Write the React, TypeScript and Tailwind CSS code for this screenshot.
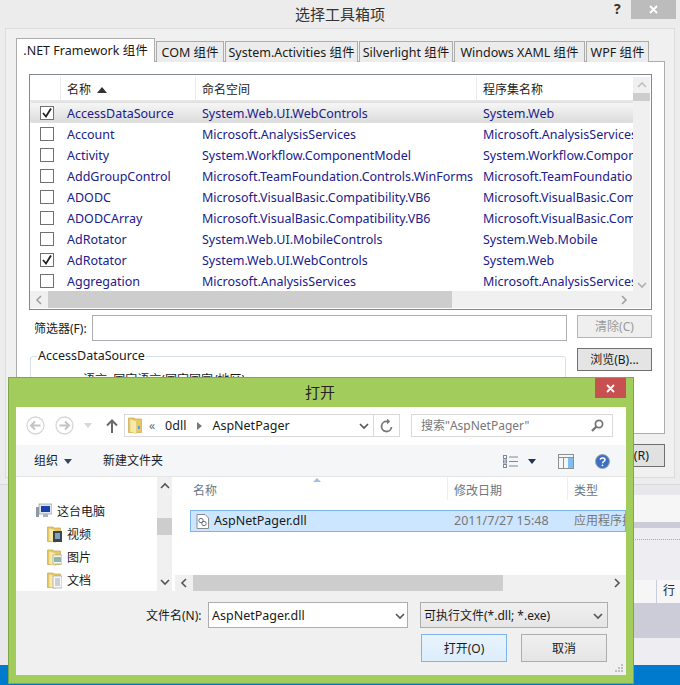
import React from "react";

const rows: [string, string, string, boolean][] = [
  ["AccessDataSource", "System.Web.UI.WebControls", "System.Web", true],
  ["Account", "Microsoft.AnalysisServices", "Microsoft.AnalysisServices", false],
  ["Activity", "System.Workflow.ComponentModel", "System.Workflow.ComponentModel", false],
  ["AddGroupControl", "Microsoft.TeamFoundation.Controls.WinForms", "Microsoft.TeamFoundation.Controls", false],
  ["ADODC", "Microsoft.VisualBasic.Compatibility.VB6", "Microsoft.VisualBasic.Compatibility", false],
  ["ADODCArray", "Microsoft.VisualBasic.Compatibility.VB6", "Microsoft.VisualBasic.Compatibility", false],
  ["AdRotator", "System.Web.UI.MobileControls", "System.Web.Mobile", false],
  ["AdRotator", "System.Web.UI.WebControls", "System.Web", true],
  ["Aggregation", "Microsoft.AnalysisServices", "Microsoft.AnalysisServices", false],
];

const tabs: [string, string][] = [
  ["COM 组件", "w-[68px]"],
  ["System.Activities 组件", "w-[133px]"],
  ["Silverlight 组件", "w-[94px]"],
  ["Windows XAML 组件", "w-[131px]"],
  ["WPF 组件", "w-[63px]"],
];

function Chevron({ dir, color = "#a0a0a0" }: { dir: "up" | "down" | "left" | "right"; color?: string }) {
  const d = {
    up: "M1 7 L5 3 L9 7",
    down: "M1 3 L5 7 L9 3",
    left: "M7 1 L3 5 L7 9",
    right: "M3 1 L7 5 L3 9",
  }[dir];
  return (
    <svg width="10" height="10" viewBox="0 0 10 10" fill="none" stroke={color} strokeWidth="1.6">
      <path d={d} />
    </svg>
  );
}

function Folder({ kind }: { kind: "plain" | "video" | "image" | "doc" }) {
  return (
    <svg width="15" height="17" viewBox="0 0 15 17" className="shrink-0">
      <path d="M0.5 1 H6 L7 2 H13.5 V15.5 H0.5 Z" fill="#e6c860" stroke="#c8a74e" strokeWidth="0.7" />
      <path d="M2 2 L8.5 4 V16.5 L2 15 Z" fill="#f8e9a6" stroke="#dcc06a" strokeWidth="0.5" />
      {kind === "plain" && <rect x="10" y="9" width="2" height="3" fill="#5aa0d8" />}
      {kind === "video" && <rect x="6" y="5" width="9" height="11" fill="#39454f" />}
      {kind === "video" && <rect x="8" y="7" width="5" height="6" fill="#7fa3b8" />}
      {kind === "image" && <rect x="6" y="6" width="9" height="9" fill="#f4f4f4" stroke="#9aa5ad" strokeWidth="0.7" />}
      {kind === "image" && <rect x="7" y="8" width="7" height="5" fill="#8fb7a8" />}
      {kind === "doc" && <rect x="6" y="4" width="9" height="12" fill="#f7f7f7" stroke="#9aa5ad" strokeWidth="0.7" />}
      {kind === "doc" && <path d="M8 7 H13 M8 9 H13 M8 11 H13 M8 13 H13" stroke="#8a98a8" strokeWidth="0.8" />}
    </svg>
  );
}

function NavCircle({ flip }: { flip?: boolean }) {
  return (
    <svg width="19" height="19" viewBox="0 0 19 19" fill="none">
      <circle cx="9.5" cy="9.5" r="8.5" stroke="#d6d6d6" strokeWidth="1.3" />
      <path
        d={flip ? "M4.5 9.5 H14 M10 5.5 L14 9.5 L10 13.5" : "M14.5 9.5 H5 M9 5.5 L5 9.5 L9 13.5"}
        stroke="#c4c4c4"
        strokeWidth="2"
      />
    </svg>
  );
}

function Band({ cls, children }: { cls: string; children?: React.ReactNode }) {
  return <div className={cls}>{children}</div>;
}

export default function App() {
  return (
    <div
      className="relative w-[680px] h-[685px] overflow-hidden flex flex-col bg-[#eeeef2] text-[12.5px] leading-[18px] text-[#1a1a1a]"
      style={{ fontFamily: '"Noto Sans", "Noto Sans CJK SC", sans-serif' }}
    >
      {/* Back dialog */}
      <div className="h-[485px] shrink-0 flex flex-col bg-[#ececec] border-b border-[#d8d8dc]">
        <div className="relative h-[28px] shrink-0 flex items-center justify-center">
          <span className="text-[15px] text-[#333]">选择工具箱项</span>
          <span className="absolute left-[614px] top-0 font-bold text-[14px] text-[#333]">?</span>
          <div className="absolute left-[631px] top-0 w-[45px] h-[19px] bg-[#bcbcbc] flex items-center justify-center">
            <svg width="9" height="9" viewBox="0 0 9 9" stroke="#fff" strokeWidth="1.8"><path d="M1 1 L8 8 M8 1 L1 8" /></svg>
          </div>
        </div>
        <div className="mx-[5px] h-[450px] bg-[#f0f0f0] border border-[#dcdcdc] px-[10px] pt-[10px] flex flex-col">
          {/* Tabs */}
          <div className="flex h-[23px] gap-px items-end shrink-0 relative z-10">
            <div className="w-[139px] h-[24px] bg-white border border-b-0 border-[#acacac] flex items-center justify-center whitespace-nowrap">.NET Framework 组件</div>
            {tabs.map(([t, w]) => (
              <div key={t} className={`${w} h-[21px] pt-[1px] bg-[#ececec] border border-b-0 border-[#acacac] flex items-center justify-center whitespace-nowrap`}>
                {t}
              </div>
            ))}
          </div>
          {/* Panel */}
          <div className="w-[649px] h-[373px] -mt-px bg-white border border-[#acacac] pl-[12px] pt-[12px] flex flex-col">
            {/* List */}
            <div className="w-[623px] h-[236px] border border-[#82878f] flex flex-col pt-[2px]">
              <div className="flex h-[214px]">
                <div className="w-[603px] overflow-hidden">
                  <div className="grid grid-cols-[30px_135px_281px_157px] h-[25px] border-b-2 border-[#e6e6e6] text-[12px] text-[#222]">
                    <div />
                    <div className="border-l border-[#eaeaea] pl-[6px] pt-[2px] flex items-center gap-[6px]">
                      名称
                      <svg width="10" height="6" viewBox="0 0 10 6"><path d="M0 6 L5 0 L10 6 Z" fill="#333" /></svg>
                    </div>
                    <div className="border-l border-[#eaeaea] pl-[6px] pt-[2px] flex items-center">命名空间</div>
                    <div className="border-l border-[#eaeaea] pl-[6px] pt-[2px] flex items-center">程序集名称</div>
                  </div>
                  {rows.map(([a, b, c, chk], i) => (
                    <div
                      key={i}
                      className={`grid grid-cols-[30px_135px_281px_157px] h-[21px] items-center text-[#20208a] whitespace-nowrap ${
                        i === 0 ? "bg-gradient-to-b from-[#f6f6f6] to-[#dcdcdc] border-y border-[#e0e0e0] rounded-l-[2px]" : ""
                      }`}
                    >
                      <div className="pl-[10px]">
                        <div className="w-[14px] h-[14px] border border-[#707070] bg-white flex items-center justify-center">
                          {chk && (
                            <svg width="12" height="12" viewBox="0 0 12 12" fill="none" stroke="#222" strokeWidth="1.8"><path d="M2 6 L5 9.5 L10 1.5" /></svg>
                          )}
                        </div>
                      </div>
                      <div className="pl-[7px] pt-[2px] overflow-hidden">{a}</div>
                      <div className="pl-[7px] pt-[2px] overflow-hidden">{b}</div>
                      <div className="pl-[7px] pt-[2px] overflow-hidden">{c}</div>
                    </div>
                  ))}
                </div>
                <div className="w-[17px] bg-[#f0f0f0] flex flex-col">
                  <div className="h-[16px] flex items-center justify-center"><Chevron dir="up" color="#c0c0c0" /></div>
                  <div className="h-[8px] bg-[#cdcdcd]" />
                  <div className="h-[178px]" />
                  <div className="h-[12px] flex items-center justify-center"><Chevron dir="down" color="#b0b0b0" /></div>
                </div>
              </div>
              <div className="flex h-[17px]">
                <div className="w-[603px] bg-[#f0f0f0] flex">
                  <div className="w-[18px] flex items-center justify-center"><Chevron dir="left" /></div>
                  <div className="w-[404px] bg-[#cdcdcd]" />
                  <div className="flex-1 flex items-center justify-end pr-[4px]"><Chevron dir="right" /></div>
                </div>
                <div className="w-[17px] bg-[#f0f0f0]" />
              </div>
            </div>
            {/* Filter and details */}
            <div className="flex mt-[5px]">
              <div className="w-[538px] flex flex-col">
                <div className="flex items-center h-[26px]">
                  <span className="w-[63px] pl-[5px] pt-[2px] whitespace-nowrap text-[12px]">筛选器(F):</span>
                  <div className="w-[475px] h-[26px] border border-[#abadb3] bg-white" />
                </div>
                <fieldset className="mt-[6px] ml-[1px] w-[536px] h-[80px] border border-[#d5dfe5] rounded-[3px] pl-[6px]">
                  <legend className="px-[1px]">AccessDataSource</legend>
                  <div className="pl-[46px] whitespace-nowrap mt-[6px] text-[12px]">语言: 固定语言(固定国家/地区)</div>
                </fieldset>
              </div>
              <div className="ml-[10px] flex flex-col gap-[10px]">
                <div className="w-[75px] h-[23px] pt-[1px] border border-[#b4b4b4] bg-[#efefef] text-[#9a9a9a] flex items-center justify-center text-[12px]">清除(C)</div>
                <div className="w-[75px] h-[23px] pt-[1px] border border-[#707070] bg-[#e4e4e4] flex items-center justify-center text-[12px]">浏览(B)...</div>
              </div>
            </div>
          </div>
          {/* Dialog footer */}
          <div className="flex justify-end mt-[10px]">
            <div className="w-[80px] h-[23px] mr-[-1px] border border-[#707070] bg-[#e1e1e1] flex items-center justify-end pr-[15px]">(R)</div>
          </div>
        </div>
      </div>

      {/* IDE behind */}
      <div className="flex-1 flex min-h-0">
        <div className="w-[8px] bg-[#e8e8ec] h-[180px]" />
        <div className="flex-1 flex flex-col">
          <Band cls="h-[10px] bg-[#e8e8ec]" />
          <Band cls="h-[27px] bg-[#f6f6f6]" />
          <Band cls="h-[6px] bg-[#ccccd9]" />
          <Band cls="h-[52px] bg-[#eeeef2] pt-[11px]">
            <div className="border-t border-dotted border-[#a8a8b0]" />
          </Band>
          <Band cls="h-[23px] bg-[#f6f6f6] flex justify-end">
            <div className="w-[24px] border-l border-[#ccccd9] pl-[6px] pt-[2px] text-[#222] text-[12px]">行</div>
          </Band>
          <Band cls="h-[35px] bg-[#ccccd9]" />
          <Band cls="h-[27px] bg-[#eeeef2]" />
        </div>
      </div>
      <div className="h-[20px] shrink-0 bg-[#007acc]" />

      {/* Open file dialog (floating window) */}
      <div className="absolute left-[8px] top-[377px] w-[626px] h-[307px] bg-[#a2cd5c] border border-[#7fa84c] flex flex-col">
        <div className="relative h-[29px] shrink-0 flex items-center justify-center pb-[2px] pr-[2px]">
          <span className="text-[15px] text-[#222]">打开</span>
          <div className="absolute right-[7px] top-0 w-[31px] h-[20px] bg-[#c75050] flex items-center justify-center">
            <svg width="9" height="9" viewBox="0 0 9 9" stroke="#fff" strokeWidth="1.8"><path d="M1 1 L8 8 M8 1 L1 8" /></svg>
          </div>
        </div>
        <div className="mx-[7px] h-[268px] bg-white flex flex-col overflow-hidden">
          {/* Nav toolbar */}
          <div className="h-[38px] shrink-0 flex items-center pl-[10px] pb-[1px]">
            <NavCircle />
            <div className="w-[10px]" />
            <NavCircle flip />
            <svg width="8" height="5" viewBox="0 0 8 5" className="ml-[10px]"><path d="M0 0 H8 L4 5 Z" fill="#d8d8d8" /></svg>
            <svg width="12" height="14" viewBox="0 0 12 14" className="ml-[14px]" fill="none" stroke="#6a6a6a" strokeWidth="2"><path d="M6 14 V2 M1 6.5 L6 1.5 L11 6.5" /></svg>
            <div className="ml-[6px] w-[276px] h-[23px] border border-[#d9d9d9] flex items-center pl-[3px]">
              <Folder kind="plain" />
              <span className="ml-[6px] text-[#6a6a6a] text-[12px]">«</span>
              <span className="ml-[10px]">0dll</span>
              <svg width="5" height="8" viewBox="0 0 5 8" className="ml-[11px]"><path d="M0 0 L5 4 L0 8 Z" fill="#777" /></svg>
              <span className="ml-[10px]">AspNetPager</span>
              <div className="flex-1" />
              <div className="pr-[4px]"><Chevron dir="down" color="#555" /></div>
              <div className="w-[26px] h-full border-l border-[#d9d9d9] flex items-center justify-center">
                <svg width="14" height="14" viewBox="0 0 14 14" fill="none" stroke="#777" strokeWidth="1.8"><path d="M11.5 8 A5 5 0 1 1 7 2.5 H9" /><path d="M7 0 L10 2.5 L7 5" fill="#777" strokeWidth="0.5" /></svg>
              </div>
            </div>
            <div className="ml-[11px] w-[202px] h-[23px] border border-[#d9d9d9] flex items-center pl-[9px] pr-[8px] justify-between text-[#777] text-[12px]">
              <span className="whitespace-nowrap">搜索"AspNetPager"</span>
              <svg width="13" height="13" viewBox="0 0 13 13" fill="none" stroke="#777" strokeWidth="1.8"><circle cx="8" cy="5" r="3.6" /><path d="M5.5 7.5 L1 12" strokeWidth="2.4" /></svg>
            </div>
          </div>
          {/* Command bar */}
          <div className="h-[32px] shrink-0 bg-[#f5f6f7] border-b border-[#e5e5e5] flex items-center pl-[18px] pt-[1px] text-[#222] text-[12px]">
            <span>组织</span>
            <svg width="8" height="5" viewBox="0 0 8 5" className="ml-[6px]"><path d="M0 0 H8 L4 5 Z" fill="#33475e" /></svg>
            <span className="ml-[31px]">新建文件夹</span>
            <div className="flex-1" />
            <svg width="15" height="13" viewBox="0 0 15 13" fill="none" stroke="#7d8a99"><path d="M6 2 H15 M6 6.5 H15 M6 11 H15" /><rect x="0.5" y="0.5" width="3" height="3" /><rect x="0.5" y="5" width="3" height="3" /><rect x="0.5" y="9.5" width="3" height="3" /><rect x="1.5" y="6" width="1" height="1" fill="#d9534f" stroke="none" /></svg>
            <svg width="8" height="5" viewBox="0 0 8 5" className="ml-[10px]"><path d="M0 0 H8 L4 5 Z" fill="#1d3557" /></svg>
            <svg width="16" height="15" viewBox="0 0 16 15" className="ml-[22px]" fill="none"><rect x="0.5" y="0.5" width="15" height="14" stroke="#8f8f8f" /><path d="M1 3.5 H15 M5.5 3.5 V14" stroke="#8f8f8f" /><rect x="10" y="4" width="5" height="10" fill="#7fbcef" /></svg>
            <svg width="15" height="15" viewBox="0 0 15 15" className="ml-[21px] mr-[16px]"><circle cx="7.5" cy="7.5" r="7" fill="#3b6fc4" stroke="#9aa4b4" strokeWidth="1" /><path d="M5.3 5.6 C5.5 3.4 10 3.4 10 5.8 C10 7.5 7.6 7.3 7.6 9.2" stroke="#fff" strokeWidth="1.5" fill="none" /><circle cx="7.5" cy="11.3" r="0.9" fill="#fff" /></svg>
          </div>
          {/* Panes */}
          <div className="h-[114px] shrink-0 flex">
            <div className="w-[141px] pl-[20px] pt-[26px] flex flex-col overflow-hidden text-[12px]">
              <div className="flex items-center h-[16px] gap-[5px] shrink-0">
                <svg width="16" height="16" viewBox="0 0 16 16"><rect x="0" y="4" width="3" height="10" fill="#8c98a4" /><rect x="3" y="1" width="13" height="10" fill="#dfe5ea" stroke="#8c98a4" strokeWidth="0.7" /><rect x="5" y="3" width="9" height="6" fill="#1c3fae" /><rect x="7" y="11" width="5" height="3" fill="#aab4bd" /></svg>
                <span className="pt-[2px]">这台电脑</span>
              </div>
              <div className="mt-[4px] flex flex-col shrink-0">
                {([["视频", "video"], ["图片", "image"], ["文档", "doc"]] as const).map(([t, k]) => (
                  <div key={t} className="flex items-center h-[23px] pl-[11px] gap-[5px] shrink-0">
                    <Folder kind={k} />
                    <span className="pt-[1px]">{t}</span>
                  </div>
                ))}
              </div>
            </div>
            <div className="w-[15px] bg-[#f0f0f0] flex flex-col items-center">
              <div className="h-[18px] flex items-center"><Chevron dir="up" color="#555" /></div>
              <div className="h-[23px]" />
              <div className="w-full h-[17px] bg-[#cdcdcd]" />
              <div className="h-[38px]" />
              <div className="h-[18px] flex items-center"><Chevron dir="down" color="#555" /></div>
            </div>
            <div className="w-[3px]" />
            <div className="flex-1 flex flex-col min-w-0">
              <div className="h-[23px] shrink-0 grid grid-cols-[272px_120px_58px] text-[#6d7680] text-[12px] relative">
                <div className="pl-[18px] flex items-center pt-[5px]">名称</div>
                <div className="border-l border-[#eeeeee] pl-[6px] flex items-center pt-[5px]">修改日期</div>
                <div className="border-l border-[#eeeeee] pl-[6px] flex items-center pt-[5px]">类型</div>
                <svg width="8" height="4" viewBox="0 0 8 4" className="absolute left-[138px] top-[1px]"><path d="M0 4 L4 0 L8 4 Z" fill="#9cc3e6" /></svg>
              </div>
              <div className="mt-[10px] ml-[15px] h-[22px] shrink-0 bg-[#cde6ff] border border-[#7ab4ea] grid grid-cols-[256px_120px_59px] items-center overflow-hidden whitespace-nowrap">
                <div className="flex items-center pl-[5px] gap-[5px]">
                  <svg width="13" height="15" viewBox="0 0 13 15" fill="none"><path d="M1 0.5 H9 L12.5 4 V14.5 H1 Z" fill="#fff" stroke="#8c8c8c" /><circle cx="5" cy="6.5" r="2.2" stroke="#5e6e80" /><circle cx="8" cy="9.5" r="2.2" stroke="#5e6e80" /></svg>
                  <span>AspNetPager.dll</span>
                </div>
                <div className="pl-[7px] text-[#777]">2011/7/27 15:48</div>
                <div className="pl-[7px] text-[#777] text-[12px] overflow-hidden">应用程序扩展</div>
              </div>
              <div className="flex-1" />
              <div className="h-[16px] shrink-0 flex bg-[#f0f0f0]">
                <div className="w-[18px] flex items-center justify-center"><Chevron dir="left" color="#555" /></div>
                <div className="w-[310px] bg-[#cdcdcd]" />
                <div className="flex-1 flex items-center justify-end pr-[4px]"><Chevron dir="right" color="#555" /></div>
              </div>
            </div>
          </div>
          {/* Bottom */}
          <div className="flex-1 bg-[#f0f0f0] relative flex flex-col">
            <div className="flex mt-[11px] h-[26px] items-center">
              <span className="ml-[130px] w-[62px] pt-[2px] whitespace-nowrap text-[12px]">文件名(N):</span>
              <div className="w-[200px] h-[26px] pt-[1px] border border-[#adadad] bg-white flex items-center justify-between pl-[3px] pr-[2px]">
                <span>AspNetPager.dll</span>
                <Chevron dir="down" color="#555" />
              </div>
              <div className="ml-[12px] w-[188px] h-[26px] pt-[1px] border border-[#adadad] bg-gradient-to-b from-[#f0f0f0] to-[#e5e5e5] flex items-center justify-between pl-[3px] pr-[4px] whitespace-nowrap text-[12px]">
                <span>可执行文件(*.dll; *.exe)</span>
                <Chevron dir="down" color="#555" />
              </div>
            </div>
            <div className="flex mt-[6px] ml-[405px] gap-[14px] text-[12px]">
              <div className="w-[86px] h-[28px] pt-[1px] border border-[#7eb4ea] bg-gradient-to-b from-[#e8f3fc] to-[#dcedfb] flex items-center justify-center">打开(O)</div>
              <div className="w-[86px] h-[28px] pt-[1px] border border-[#adadad] bg-gradient-to-b from-[#f0f0f0] to-[#e5e5e5] flex items-center justify-center">取消</div>
            </div>
            <svg width="9" height="9" viewBox="0 0 9 9" className="absolute right-[2px] bottom-[2px]" fill="#c0c0c0"><rect x="6" y="0" width="2" height="2" /><rect x="3" y="3" width="2" height="2" /><rect x="6" y="3" width="2" height="2" /><rect x="0" y="6" width="2" height="2" /><rect x="3" y="6" width="2" height="2" /><rect x="6" y="6" width="2" height="2" /></svg>
          </div>
        </div>
      </div>
    </div>
  );
}
